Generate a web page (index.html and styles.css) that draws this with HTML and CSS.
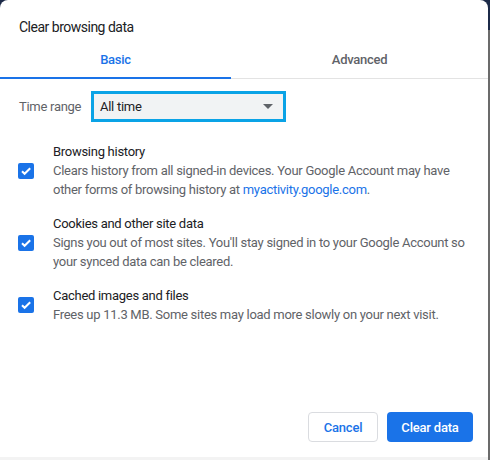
FILE: index.html
```html
<!DOCTYPE html>
<html>
<head>
<meta charset="utf-8">
<link rel="stylesheet" href="styles.css">
</head>
<body>
<div class="dialog">
  <div class="title">Clear browsing data</div>
  <div class="tabs">
    <div class="tab active">Basic</div>
    <div class="tab">Advanced</div>
  </div>
  <div class="range">
    <span class="range-label">Time range</span>
    <div class="select">
      <span>All time</span>
      <span class="arrow"></span>
    </div>
  </div>
  <div class="items">
    <div class="item">
      <span class="check"><svg viewBox="0 0 16 16" width="16" height="16"><path d="M4 8.2l2.6 2.6L12.2 5.2" fill="none" stroke="#fff" stroke-width="2"/></svg></span>
      <div class="text">
        <div class="item-title">Browsing history</div>
        <div class="item-desc"><span>Clears history from all signed-in devices. Your Google Account may have</span> <span>other forms of browsing history at</span> <span class="link">myactivity.google.com</span><span>.</span></div>
      </div>
    </div>
    <div class="item">
      <span class="check"><svg viewBox="0 0 16 16" width="16" height="16"><path d="M4 8.2l2.6 2.6L12.2 5.2" fill="none" stroke="#fff" stroke-width="2"/></svg></span>
      <div class="text">
        <div class="item-title">Cookies and other site data</div>
        <div class="item-desc">Signs you out of most sites. You'll stay signed in to your Google Account so your synced data can be cleared.</div>
      </div>
    </div>
    <div class="item">
      <span class="check"><svg viewBox="0 0 16 16" width="16" height="16"><path d="M4 8.2l2.6 2.6L12.2 5.2" fill="none" stroke="#fff" stroke-width="2"/></svg></span>
      <div class="text">
        <div class="item-title">Cached images and files</div>
        <div class="item-desc">Frees up 11.3 MB. Some sites may load more slowly on your next visit.</div>
      </div>
    </div>
  </div>
  <div class="buttons">
    <button class="btn cancel">Cancel</button>
    <button class="btn primary">Clear data</button>
  </div>
</div>
</body>
</html>
```
FILE: styles.css
```css
html, body {
  margin: 0;
  padding: 0;
}
body {
  width: 490px;
  height: 460px;
  background: linear-gradient(to bottom, #1c2a48 0, #1c2a48 30px, #6b6b6b 30px);
  font-family: Roboto, "Noto Sans", sans-serif;
  letter-spacing: -0.28px;
  overflow: hidden;
}
.dialog {
  width: 488px;
  height: 460px;
  background: #fff;
  border-radius: 8px 8px 0 0;
  display: flex;
  flex-direction: column;
  box-sizing: border-box;
  border-bottom: 3px solid #f3f3f3;
}
.title {
  font-size: 14px;
  letter-spacing: -0.5px;
  line-height: 20px;
  color: #202124;
  padding: 17px 19px 0;
}
.tabs {
  display: flex;
  margin-top: 4px;
  border-bottom: 1px solid #e3e3e3;
}
.tab {
  height: 37px;
  line-height: 37px;
  text-align: center;
  font-size: 13px;
  font-weight: 500;
  color: #5f6368;
  flex: 1;
  box-sizing: border-box;
}
.tab.active {
  flex: 0 0 231px;
  color: #1a73e8;
  border-bottom: 2px solid #1a73e8;
  margin-bottom: -1px;
  height: 38px;
}
.range {
  display: flex;
  align-items: center;
  padding: 12px 0 0 19px;
}
.range-label {
  font-size: 13px;
  color: #5f6368;
  width: 72px;
}
.select {
  width: 195px;
  height: 31px;
  box-sizing: border-box;
  border: 3px solid #0aa3e6;
  background: #f1f3f4;
  display: flex;
  align-items: center;
  justify-content: space-between;
  padding: 0 10px 0 6px;
  font-size: 13px;
  color: #202124;
}
.arrow {
  width: 0;
  height: 0;
  border-left: 5px solid transparent;
  border-right: 5px solid transparent;
  border-top: 5px solid #5f6368;
}
.items {
  display: flex;
  flex-direction: column;
  gap: 15px;
  padding: 20px 0 0 18px;
}
.item {
  display: flex;
  align-items: center;
}
.check {
  width: 16px;
  height: 16px;
  border-radius: 2px;
  background: #1a73e8;
  flex: none;
  display: flex;
  margin-right: 19px;
}
.text {
  font-size: 13px;
  line-height: 19px;
}
.item-title {
  color: #202124;
}
.item-desc {
  color: #5f6368;
  width: 412px;
}
.link {
  color: #1a73e8;
}
.buttons {
  margin-top: auto;
  display: flex;
  justify-content: flex-end;
  gap: 9px;
  padding: 0 15px 15px 0;
}
.btn {
  height: 30px;
  border-radius: 4px;
  font-family: Roboto, "Noto Sans", sans-serif;
  font-size: 13px;
  font-weight: 500;
  letter-spacing: -0.2px;
  box-sizing: border-box;
  cursor: pointer;
}
.cancel {
  width: 70px;
  background: #fff;
  color: #1a73e8;
  border: 1px solid #dadce0;
}
.primary {
  width: 86px;
  background: #1a73e8;
  color: #fff;
  border: none;
}
```
